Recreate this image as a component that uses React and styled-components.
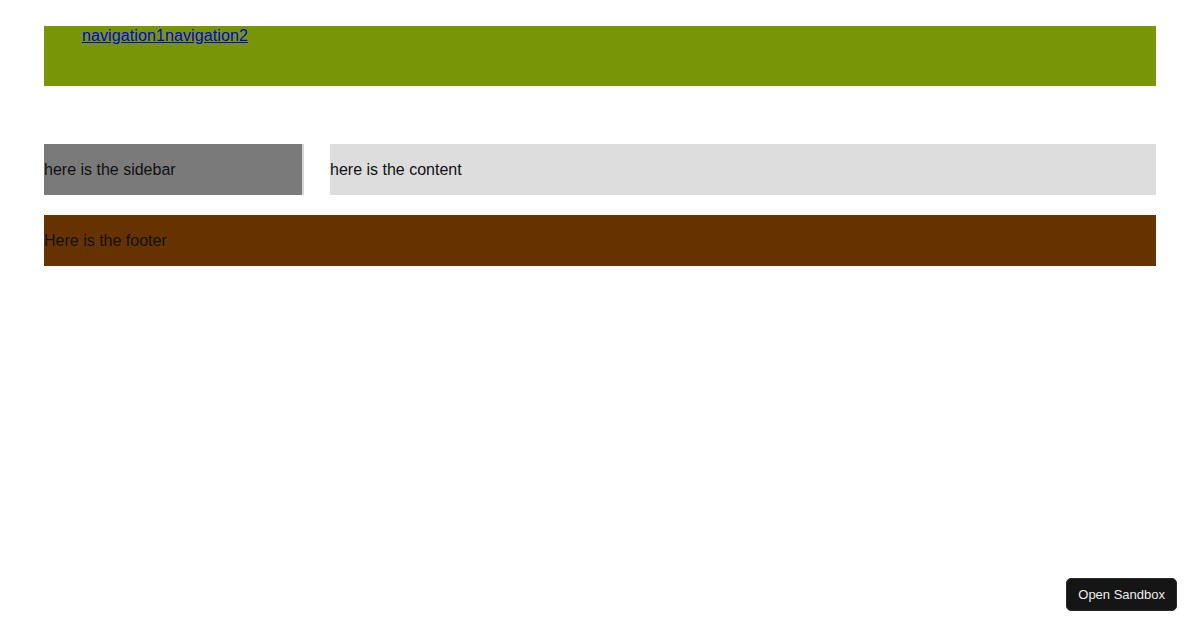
import React from 'react';
import styled, { createGlobalStyle } from 'styled-components';

const GlobalStyle = createGlobalStyle`
body {
  margin: 0;
  background: #fff;
  font-family: "Liberation Sans", Arial, sans-serif;
  font-size: 16px;
  color: #111;
}
`;

const Page = styled.div`
padding: 26px 44px 0;
`;

const Header = styled.header`
height: 60px;
background: #779506;
`;

const NavList = styled.ul`
margin: 0;
padding: 1px 0 0 38px;
list-style: none;
display: flex;
line-height: 18px;
`;

const NavLink = styled.a`
color: #0000ee;
text-decoration: underline;
letter-spacing: 0.1px;
`;

const Main = styled.div`
display: flex;
gap: 26px;
margin-top: 58px;
`;

const Panel = styled.div`
height: 51px;
line-height: 51px;
background: ${({ bg }) => bg};
`;

const Sidebar = styled(Panel)`
width: 258px;
border-right: 2px solid #d6d6d6;
`;

const Content = styled(Panel)`
flex: 1;
`;

const Footer = styled(Panel)`
margin-top: 20px;
`;

const SandboxButton = styled.button`
position: fixed;
right: 23px;
bottom: 19px;
height: 33px;
padding: 0 11px;
border: 1px solid #2a2a2a;
border-radius: 5px;
background: #151515;
color: #eee;
font-family: "Liberation Sans", Arial, sans-serif;
font-size: 13px;
`;

const App = () => {
  return (
    <>
      <GlobalStyle />
      <Page>
        <Header>
          <NavList>
            <li><NavLink href="#">navigation1</NavLink></li>
            <li><NavLink href="#">navigation2</NavLink></li>
          </NavList>
        </Header>
        <Main>
          <Sidebar bg="#7a7a7a">here is the sidebar</Sidebar>
          <Content bg="#dddddd">here is the content</Content>
        </Main>
        <Footer bg="#663300">Here is the footer</Footer>
      </Page>
      <SandboxButton>Open Sandbox</SandboxButton>
    </>
  );
};

export default App;
